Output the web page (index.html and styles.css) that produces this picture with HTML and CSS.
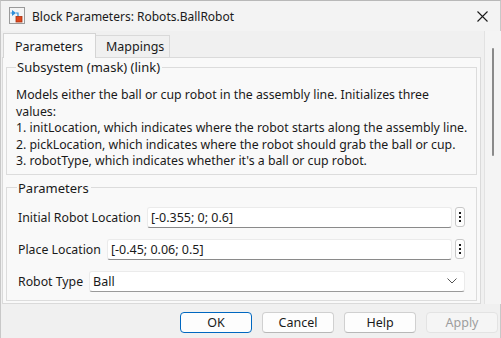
FILE: index.html
```html
<!DOCTYPE html>
<html lang="en">
<head>
  <meta charset="UTF-8" />
  <title>Block Parameters: Robots.BallRobot</title>
  <link rel="stylesheet" href="styles.css">
</head>
<body>
  <div class="window">

    <!-- Title bar -->
    <div class="titlebar">
      <svg class="app-icon" width="16" height="17" viewBox="0 0 16 17">
        <rect x="0.5" y="0.5" width="15" height="16" fill="#f4f4f4" stroke="#9a9a9a" />
        <path d="M3 3 L3 9 L7 6 Z" fill="#2f8fd8" />
        <path d="M1.5 6 H3 M7 6 H9 V10" stroke="#2f8fd8" stroke-width="1.2" fill="none" />
        <rect x="7" y="9.5" width="6" height="5.5" fill="#e0461c" stroke="#a8300f" stroke-width="0.8" />
      </svg>
      <span class="title">Block Parameters: Robots.BallRobot</span>
      <svg class="close" width="11" height="11" viewBox="0 0 11 11">
        <path d="M0.5 0.5 L10.5 10.5 M10.5 0.5 L0.5 10.5" stroke="#1a1a1a" stroke-width="1.1" />
      </svg>
    </div>

    <div class="main">
      <div class="left">
        <!-- Tabs -->
        <div class="tabs">
          <div class="tab active">Parameters</div>
          <div class="tab">Mappings</div>
        </div>

        <!-- Tab page -->
        <div class="page">
          <fieldset class="group">
            <legend>Subsystem (mask) (link)</legend>
            <p class="desc">Models either the ball or cup robot in the assembly line. Initializes three<br>values:<br>1. initLocation, which indicates where the robot starts along the assembly line.<br>2. pickLocation, which indicates where the robot should grab the ball or cup.<br>3. robotType, which indicates whether it's a ball or cup robot.</p>
          </fieldset>

          <fieldset class="group params">
            <legend>Parameters</legend>

            <div class="row">
              <label>Initial Robot Location</label>
              <div class="field">[-0.355; 0; 0.6]</div>
              <div class="more"><i></i><i></i><i></i></div>
            </div>

            <div class="row">
              <label>Place Location</label>
              <div class="field">[-0.45; 0.06; 0.5]</div>
              <div class="more"><i></i><i></i><i></i></div>
            </div>

            <div class="row">
              <label>Robot Type</label>
              <div class="field select">
                Ball
                <svg class="chevron" width="10" height="6" viewBox="0 0 10 6">
                  <path d="M0.5 0.5 L5 5 L9.5 0.5" stroke="#555" fill="none" />
                </svg>
              </div>
            </div>
          </fieldset>
        </div>
      </div>

      <!-- Vertical scrollbar -->
      <div class="scrollbar"><div class="thumb"></div></div>
    </div>

    <!-- Dialog buttons -->
    <div class="buttons">
      <button class="btn default">OK</button>
      <button class="btn">Cancel</button>
      <button class="btn">Help</button>
      <button class="btn" disabled>Apply</button>
    </div>
  </div>
</body>
</html>
```

FILE: styles.css
```css
/* Windows-style dialog */
* {
  box-sizing: border-box;
}

body {
  margin: 0;
  width: 501px;
  height: 338px;
  overflow: hidden;
  font-family: "Noto Sans", "Open Sans", sans-serif;
  font-size: 12px;
  color: #1a1a1a;
  background: #f0f0f0;
}

.window {
  height: 338px;
  display: flex;
  flex-direction: column;
  border-left: 1px solid #c8c8c8;
  border-right: 1px solid #c8c8c8;
  border-top: 1px solid #b8b8b8;
  background: #f0f0f0;
}

/* Title bar */
.titlebar {
  height: 30px;
  flex: none;
  display: flex;
  align-items: center;
  padding: 0 10px 0 8px;
  background: #f3f3f3;
}

.app-icon {
  margin-right: 7px;
  margin-top: -1px;
}

.title {
  flex: 1;
  font-size: 12px;
}

.close {
  margin-right: 2px;
}

.main {
  flex: 1;
  display: flex;
  min-height: 0;
}

.left {
  flex: 1;
  display: flex;
  flex-direction: column;
  padding-left: 1px;
}

/* Tabs */
.tabs {
  display: flex;
  align-items: flex-end;
  height: 26px;
  padding-left: 1px;
}

.tab {
  height: 22px;
  padding: 0 5px 0 10px;
  display: flex;
  align-items: center;
  font-size: 12.5px;
  background: #f0f0f0;
  border: 1px solid #d9d9d9;
  border-bottom: none;
}

.tab.active {
  height: 25px;
  padding: 0 12px 0 11px;
  background: #f9f9f9;
  border-color: #d4d4d4;
  position: relative;
  top: 1px;
}

.tab + .tab {
  margin-left: -1px;
}

/* Tab page */
.page {
  flex: 1;
  margin-right: 3px;
  background: #f9f9f9;
  border: 1px solid #dadada;
  padding: 1px 3px 0 3px;
  overflow: hidden;
}

.group {
  margin: 0;
  padding: 0 9px 0 9px;
  border: 1px solid #dcdcdc;
}

.group legend {
  padding: 0 2px 0 1px;
  margin-left: 0;
  font-size: 13px;
  line-height: 16px;
  color: #1a1a1a;
}

.desc {
  margin: 12px 0 4px 0;
  line-height: 16.5px;
  font-size: 12.3px;
  white-space: nowrap;
}

.params {
  margin-top: 5px;
  padding: 11px 11px 8px 10px;
}

/* Parameter rows */
.row {
  display: flex;
  align-items: center;
  gap: 6px;
  height: 21px;
  margin-bottom: 11px;
}

.row:last-child {
  margin-bottom: 0;
}

.row label {
  flex: none;
  padding-left: 1px;
  font-size: 12.3px;
}

.field {
  flex: 1;
  height: 21px;
  display: flex;
  align-items: center;
  padding: 0 3px;
  background: #ffffff;
  border: 1px solid #ebebeb;
  border-bottom: 1px solid #8a8a8a;
  border-radius: 3px;
  font-size: 12.5px;
}

.row .field + .more {
  margin-left: -3px;
}

.select {
  border-bottom-color: #9a9a9a;
  justify-content: space-between;
  padding-right: 7px;
}

.more {
  flex: none;
  width: 10px;
  height: 20px;
  display: flex;
  flex-direction: column;
  align-items: center;
  justify-content: center;
  gap: 2px;
  border: 1px solid #c8c8c8;
  border-radius: 3px;
  background: #fdfdfd;
}

.more i {
  width: 2px;
  height: 2px;
  background: #1a1a1a;
}

/* Scrollbar */
.scrollbar {
  width: 17px;
  flex: none;
  border-left: 1px solid #e2e2e2;
  background: #f4f4f4;
  padding-top: 17px;
  padding-left: 7px;
}

.thumb {
  width: 2px;
  height: 108px;
  background: #8a8a8a;
  border-radius: 1px;
}

/* Dialog buttons */
.buttons {
  height: 34px;
  flex: none;
  display: flex;
  justify-content: flex-end;
  align-items: flex-start;
  gap: 10px;
  padding: 8px 2px 0 0;
}

.btn {
  width: 72px;
  height: 21px;
  padding: 0;
  font-family: inherit;
  font-size: 12.5px;
  color: #1a1a1a;
  background: #fdfdfd;
  border: 1px solid #d0d0d0;
  border-bottom-color: #b8b8b8;
  border-radius: 4px;
}

.btn.default {
  border: 1px solid #0067c0;
}

.btn:disabled {
  color: #9d9d9d;
  background: #f5f5f5;
  border-color: #e3e3e3;
}
```
